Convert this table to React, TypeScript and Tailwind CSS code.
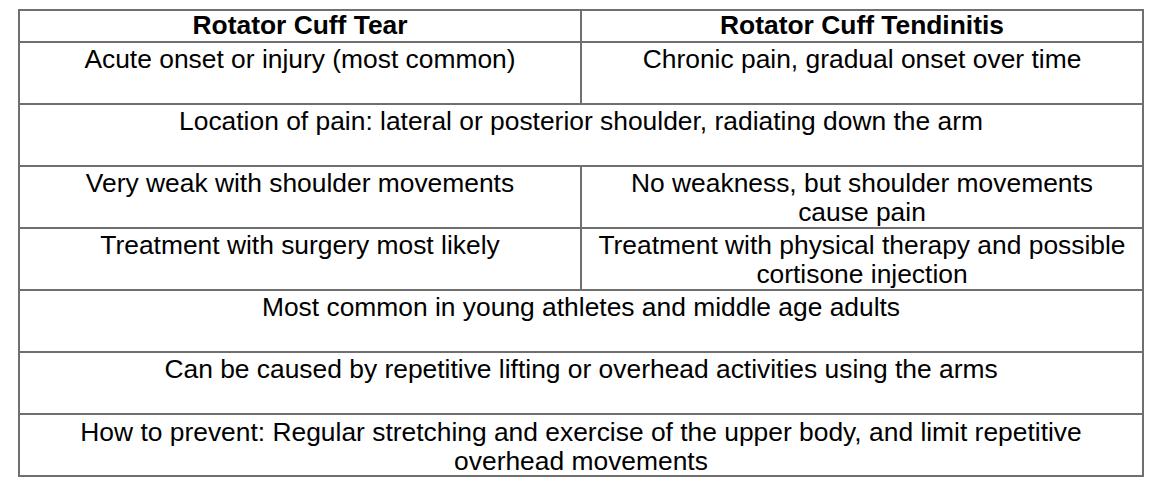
type Row =
  | { kind: "split"; left: string[]; right: string[]; pad: string }
  | { kind: "full"; text: string[]; pad: string };

const rows: Row[] = [
  {
    kind: "split",
    left: ["Acute onset or injury (most common)"],
    right: ["Chronic pain, gradual onset over time"],
    pad: "pt-[2px]",
  },
  {
    kind: "full",
    text: ["Location of pain: lateral or posterior shoulder, radiating down the arm"],
    pad: "pt-[2px]",
  },
  {
    kind: "split",
    left: ["Very weak with shoulder movements"],
    right: ["No weakness, but shoulder movements", "cause pain"],
    pad: "pt-[2px]",
  },
  {
    kind: "split",
    left: ["Treatment with surgery most likely"],
    right: ["Treatment with physical therapy and possible", "cortisone injection"],
    pad: "pt-[2px]",
  },
  {
    kind: "full",
    text: ["Most common in young athletes and middle age adults"],
    pad: "pt-[2px]",
  },
  {
    kind: "full",
    text: ["Can be caused by repetitive lifting or overhead activities using the arms"],
    pad: "pt-[2px]",
  },
  {
    kind: "full",
    text: [
      "How to prevent: Regular stretching and exercise of the upper body, and limit repetitive",
      "overhead movements",
    ],
    pad: "pt-[3px]",
  },
];

function Lines({ lines }: { lines: string[] }) {
  return (
    <p>
      {lines.map((l, i) => (
        <span key={i} className="block">
          {l}
        </span>
      ))}
    </p>
  );
}

export default function App() {
  return (
    <div className="min-h-[500px] bg-white pt-[9px] pl-[18px] font-['Liberation_Sans',Arial,sans-serif] text-[26.4px] leading-[28.5px] text-black">
      <div className="w-[1126px] border-2 border-[#6f6f6f]">
        <div className="flex h-[30px] font-bold">
          <div className="w-[560px] text-center">Rotator Cuff Tear</div>
          <div className="w-[562px] border-l-2 border-[#6f6f6f] text-center">
            Rotator Cuff Tendinitis
          </div>
        </div>
        {rows.map((row, i) =>
          row.kind === "split" ? (
            <div key={i} className="flex h-[62px] border-t-2 border-[#6f6f6f]">
              <div className={`w-[560px] px-[13px] text-center ${row.pad}`}>
                <Lines lines={row.left} />
              </div>
              <div
                className={`w-[562px] border-l-2 border-[#6f6f6f] px-[13px] text-center ${row.pad}`}
              >
                <Lines lines={row.right} />
              </div>
            </div>
          ) : (
            <div key={i} className="h-[62px] border-t-2 border-[#6f6f6f] px-[13px] text-center">
              <div className={row.pad}>
                <Lines lines={row.text} />
              </div>
            </div>
          )
        )}
      </div>
    </div>
  );
}
